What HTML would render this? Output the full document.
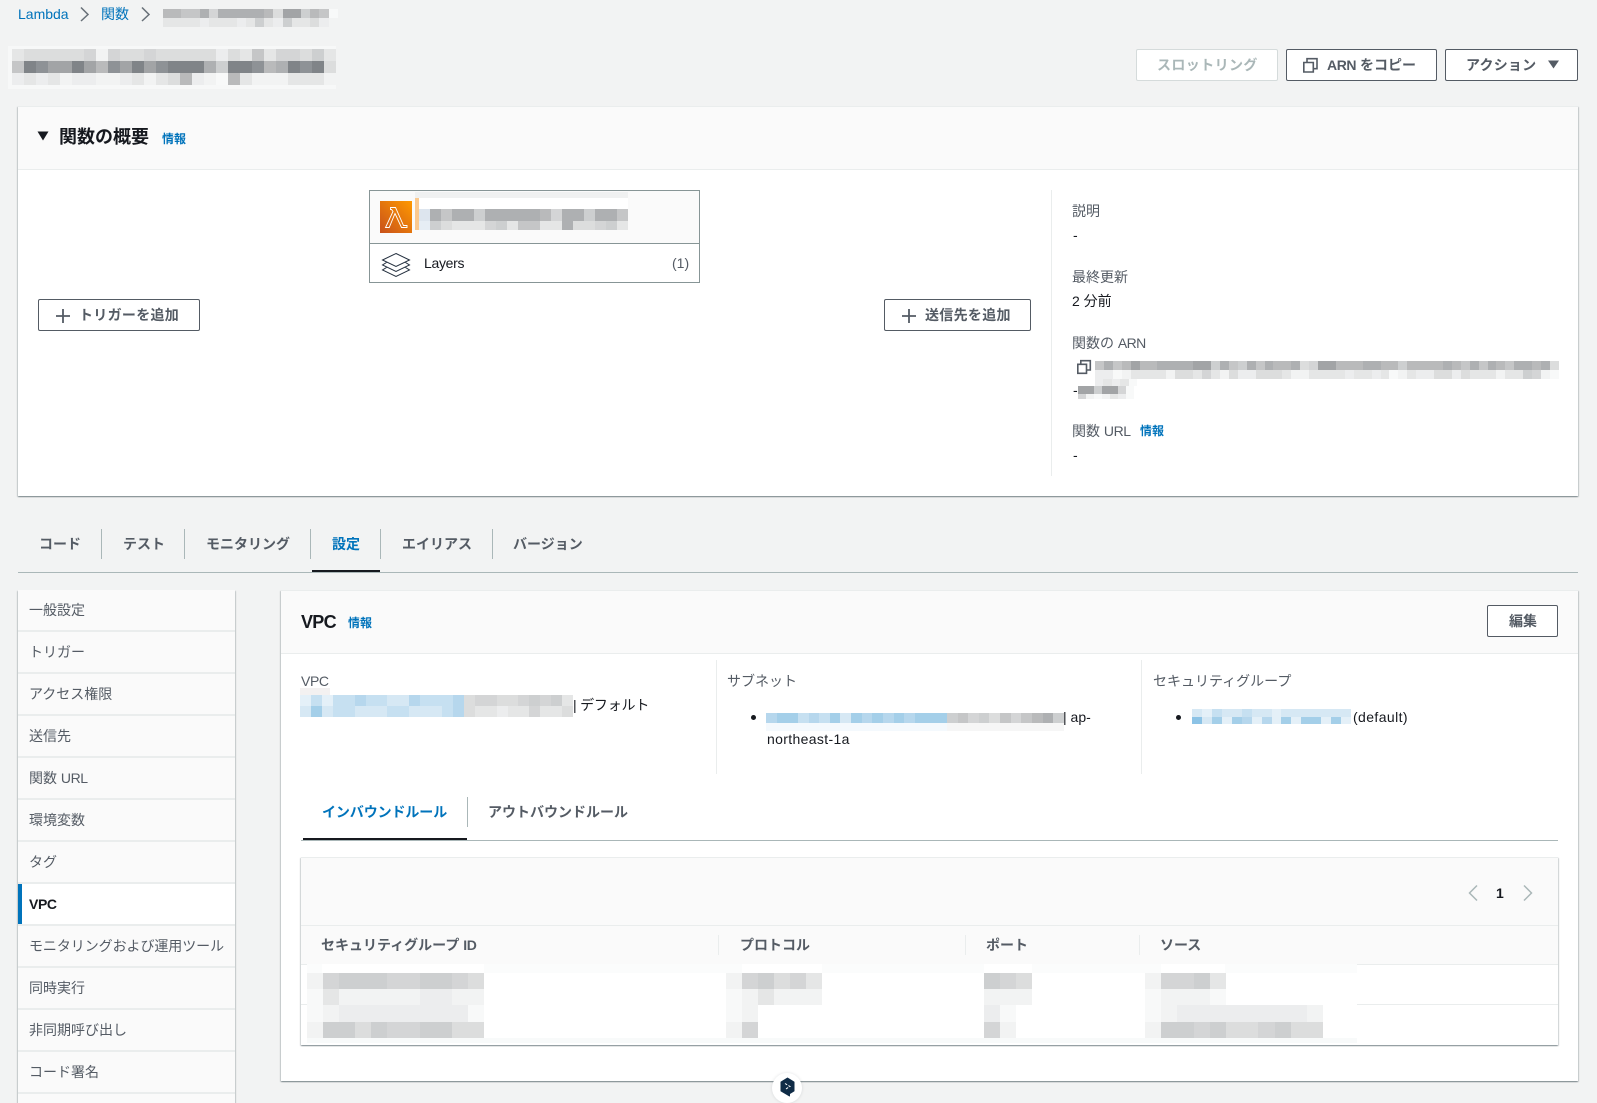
<!DOCTYPE html>
<html lang="ja"><head><meta charset="utf-8"><title>Lambda</title>
<style>
html,body{margin:0;padding:0;width:1597px;height:1103px;overflow:hidden}
body{background:#f2f3f3;font:14px/20px "Liberation Sans","Noto Sans CJK JP",sans-serif;color:#16191f}
#w{position:absolute;left:0;top:0;width:1597px;height:1103px;overflow:hidden;background:#f2f3f3}
.t{position:absolute;white-space:nowrap;line-height:20px}
.bl{color:#0073bb}.gy{color:#545b64}.b{font-weight:700}
.i{font-size:12px;font-weight:700;color:#0073bb}
.n4{letter-spacing:-.4px}
.card{position:absolute;background:#fff;box-shadow:0 1px 1px 0 rgba(0,28,36,.3),1px 1px 1px 0 rgba(0,28,36,.15),-1px 1px 1px 0 rgba(0,28,36,.15);border-top:1px solid #eaeded;box-sizing:border-box}
.hd{position:absolute;left:0;right:0;top:0;background:#fafafa;border-bottom:1px solid #eaeded;box-sizing:border-box}
.btn{position:absolute;box-sizing:border-box;background:#fff;border:1px solid #545b64;border-radius:2px;height:32px}
.l{position:absolute}
.m{position:absolute}
.m div{display:flex}
.m i{display:block;flex:1}
.p{background:#808488}.q{background:#8e9296}.r{background:#a2a4a6}.s{background:#aeb0b2}.t1{background:#b9babb}.u{background:#c5c6c7}.v{background:#cdcfd0}.w{background:#d4d5d6}.x{background:#dcdddd}.y{background:#e5e6e6}.z{background:#ecedee}.o{background:#f2f3f3}.n{background:#f8f9f9}.e{background:#fff}
.A{background:#a4cfe9}.B{background:#b6d7ed}.C{background:#c6e0f1}.D{background:#d6e8f4}.E{background:#e4f0f8}.G{background:#8cc3e6}
.si{position:absolute;left:18px;width:217px;height:40px;background:#fafafa}
.si span{position:absolute;left:11px;top:10px;white-space:nowrap;color:#545b64}
</style></head><body><div id="w">

<!-- breadcrumb -->
<span class="t bl" style="left:18px;top:4px">Lambda</span>
<svg class="l" style="left:0;top:0" width="170" height="28"><path d="M81 7.5L88 14.5 81 21M142 7.5L149 14.5 142 21" fill="none" stroke="#687078" stroke-width="1.5"/></svg>
<span class="t bl" style="left:101px;top:4px">関数</span>
<div class="m" style="left:163px;top:9px;width:175px">
<div style="height:9px"><i class=t1></i><i class=t1></i><i class=u></i><i class=u></i><i class=s></i><i class=w></i><i class=s></i><i class=s></i><i class=s></i><i class=s></i><i class=s></i><i class=t1></i><i class=x></i><i class=r></i><i class=r></i><i class=v></i><i class=t1></i><i class=u></i><i class=n></i></div>
<div style="height:9px"><i class=y></i><i class=y></i><i class=y></i><i class=y></i><i class=z></i><i class=y></i><i class=y></i><i class=y></i><i class=z></i><i class=y></i><i class=v></i><i class=y></i><i class=z></i><i class=v></i><i class=y></i><i class=y></i><i class=x></i><i class=z></i><i class=o></i></div>
</div>

<!-- title mosaic -->
<div class="l" style="left:8px;top:46px;width:328px;height:43px;background:#f7f8f8"></div>
<div class="m" style="left:12px;top:49px;width:324px">
<div style="height:12px"><i class=y></i><i class=x></i><i class=x></i><i class=x></i><i class=x></i><i class=x></i><i class=w></i><i class=o></i><i class=w></i><i class=x></i><i class=x></i><i class=w></i><i class=x></i><i class=x></i><i class=x></i><i class=x></i><i class=x></i><i class=z></i><i class=x></i><i class=y></i><i class=u></i><i class=y></i><i class=w></i><i class=w></i><i class=x></i><i class=v></i><i class=y></i></div>
<div style="height:12px"><i class=u></i><i class=p></i><i class=q></i><i class=r></i><i class=r></i><i class=p></i><i class=r></i><i class=t1></i><i class=q></i><i class=r></i><i class=p></i><i class=r></i><i class=q></i><i class=p></i><i class=p></i><i class=p></i><i class=s></i><i class=v></i><i class=p></i><i class=p></i><i class=q></i><i class=t1></i><i class=s></i><i class=p></i><i class=q></i><i class=p></i><i class=x></i></div>
<div style="height:12px"><i class=z></i><i class=y></i><i class=z></i><i class=y></i><i class=o></i><i class=z></i><i class=z></i><i class=o></i><i class=o></i><i class=z></i><i class=y></i><i class=o></i><i class=y></i><i class=x></i><i class=t1></i><i class=z></i><i class=o></i><i class=n></i><i class=t1></i><i class=y></i><i class=o></i><i class=o></i><i class=o></i><i class=y></i><i class=y></i><i class=y></i><i class=o></i></div>
</div>

<!-- top buttons -->
<div class="btn" style="left:1136px;top:49px;width:142px;border-color:#d5dbdb"></div>
<span class="t b" style="left:1157px;top:55px;color:#aab7b8;letter-spacing:.4px">スロットリング</span>
<div class="btn" style="left:1286px;top:49px;width:151px"></div>
<svg class="l" style="left:1302px;top:57px" width="17" height="16"><path d="M1.8 5.5h9.5v9.5H1.8zM5 5.5V1.7h10v10h-3.7" fill="none" stroke="#545b64" stroke-width="1.6"/></svg>
<span class="t b gy" style="left:1327px;top:55px"><span class="n4">ARN</span> をコピー</span>
<div class="btn" style="left:1445px;top:49px;width:133px"></div>
<span class="t b gy" style="left:1466px;top:55px;letter-spacing:.2px">アクション</span>
<svg class="l" style="left:1548px;top:60px" width="11" height="9"><path d="M0 .5h11L5.5 8.5z" fill="#545b64"/></svg>

<!-- overview card -->
<div class="card" style="left:18px;top:106px;width:1560px;height:390px">
 <div class="hd" style="height:63px"></div>
</div>
<svg class="l" style="left:37px;top:131px" width="12" height="10"><path d="M.5.5h11L6 9.5z" fill="#16191f"/></svg>
<span class="t b" style="left:59px;top:126px;font-size:18px;line-height:22px">関数の概要</span>
<span class="t i" style="left:162px;top:129px">情報</span>

<!-- function box -->
<div class="l" style="left:369px;top:190px;width:331px;height:93px;box-sizing:border-box;border:1px solid #879596;background:#fff">
 <div style="height:52px;background:#fafafa;border-bottom:1px solid #879596"></div>
</div>
<svg class="l" style="left:380px;top:201px" width="32" height="32" viewBox="0 0 32 32"><defs><linearGradient id="lg" x1="0" y1="1" x2="1" y2="0"><stop offset="0" stop-color="#c8511b"/><stop offset="1" stop-color="#f90"/></linearGradient></defs><rect width="32" height="32" fill="url(#lg)"/><path d="M10.5 6.5h5l8 18h3.5v2h-5.5L15 12.5 9.2 26.500H5.500L13 10.500 11.500 8.500h-1z" fill="none" stroke="#fff" stroke-width=".9"/></svg>
<div class="l" style="left:415px;top:192px;width:213px;height:6px;background:#f0f1f1"></div>
<div class="l" style="left:415px;top:198px;width:213px;height:11px;background:#fff"></div>
<div class="l" style="left:415px;top:198px;width:4px;height:32px;background:#fbc98f"></div>
<div class="m" style="left:419px;top:209px;width:209px">
<div style="height:12px"><i style="background:#dde5ee"></i><i class=s></i><i class=u></i><i class=s></i><i class=s></i><i class=v></i><i class=s></i><i class=s></i><i class=s></i><i class=s></i><i class=s></i><i class=t1></i><i class=w></i><i class=s></i><i class=s></i><i class=v></i><i class=s></i><i class=s></i><i class=u></i></div>
<div style="height:9px"><i style="background:#e6edf4"></i><i class=v></i><i class=x></i><i class=y></i><i class=y></i><i class=y></i><i class=w></i><i class=v></i><i class=y></i><i class=u></i><i class=u></i><i class=y></i><i class=y></i><i class=s></i><i class=x></i><i class=x></i><i class=w></i><i class=v></i><i class=y></i></div>
</div>
<svg class="l" style="left:380px;top:251px" width="32" height="28" viewBox="380 251 32 28"><path d="M396 253.500l13.500 6.500-13.500 6.500-13.500-6.500zM386.500 262.500l-4 2.500 13.500 6.500 13.500-6.500-4-2.500M386.500 267.500l-4 2.500 13.500 6.500 13.500-6.500-4-2.500" fill="none" stroke="#232f3e" stroke-width="1"/></svg>
<span class="t" style="left:424px;top:253px;letter-spacing:-.3px">Layers</span>
<span class="t gy" style="left:672px;top:253px">(1)</span>

<!-- add buttons -->
<div class="btn" style="left:38px;top:299px;width:162px"></div>
<svg class="l" style="left:55px;top:308px" width="16" height="16"><path d="M8 1v14M1 8h14" stroke="#545b64" stroke-width="1.8" fill="none"/></svg>
<span class="t b gy" style="left:79px;top:305px;letter-spacing:.3px">トリガーを追加</span>
<div class="btn" style="left:884px;top:299px;width:147px"></div>
<svg class="l" style="left:901px;top:308px" width="16" height="16"><path d="M8 1v14M1 8h14" stroke="#545b64" stroke-width="1.8" fill="none"/></svg>
<span class="t b gy" style="left:925px;top:305px;letter-spacing:.3px">送信先を追加</span>

<!-- right column -->
<div class="l" style="left:1051px;top:190px;width:1px;height:286px;background:#eaeded"></div>
<span class="t gy" style="left:1072px;top:201px">説明</span>
<span class="t" style="left:1073px;top:225px">-</span>
<span class="t gy" style="left:1072px;top:267px">最終更新</span>
<span class="t" style="left:1072px;top:291px">2 分前</span>
<span class="t gy" style="left:1072px;top:333px">関数の <span style="letter-spacing:-.6px">ARN</span></span>
<svg class="l" style="left:1076px;top:359px" width="16" height="16"><path d="M1.800 5.300h8.700v9H1.800zM4.800 5.300V1.700h9.500v9.300h-3.800" fill="none" stroke="#545b64" stroke-width="1.600"/></svg>
<div class="m" style="left:1095px;top:361px;width:464px">
<div style="height:9px"><i class=u></i><i class=s></i><i class=u></i><i class=t1></i><i class=r></i><i class=t1></i><i class=t1></i><i class=s></i><i class=s></i><i class=s></i><i class=s></i><i class=r></i><i class=r></i><i class=v></i><i class=s></i><i class=u></i><i class=v></i><i class=s></i><i class=u></i><i class=s></i><i class=t1></i><i class=t1></i><i class=s></i><i class=x></i><i class=w></i><i class=r></i><i class=r></i><i class=t1></i><i class=t1></i><i class=t1></i><i class=s></i><i class=s></i><i class=t1></i><i class=t1></i><i class=v></i><i class=t1></i><i class=t1></i><i class=t1></i><i class=t1></i><i class=s></i><i class=t1></i><i class=u></i><i class=s></i><i class=u></i><i class=s></i><i class=t1></i><i class=u></i><i class=s></i><i class=s></i><i class=t1></i><i class=s></i><i class=x></i></div>
<div style="height:9px"><i class=z></i><i class=z></i><i class=n></i><i class=o></i><i class=y></i><i class=y></i><i class=y></i><i class=y></i><i class=o></i><i class=x></i><i class=x></i><i class=y></i><i class=w></i><i class=y></i><i class=o></i><i class=x></i><i class=z></i><i class=z></i><i class=x></i><i class=x></i><i class=x></i><i class=y></i><i class=o></i><i class=o></i><i class=y></i><i class=y></i><i class=y></i><i class=y></i><i class=z></i><i class=y></i><i class=y></i><i class=z></i><i class=y></i><i class=n></i><i class=o></i><i class=y></i><i class=z></i><i class=z></i><i class=x></i><i class=x></i><i class=z></i><i class=x></i><i class=y></i><i class=y></i><i class=y></i><i class=o></i><i class=y></i><i class=y></i><i class=v></i><i class=w></i><i class=o></i><i class=n></i></div>
</div>
<div class="m" style="left:1095px;top:379px;width:42px"><div style="height:7px"><i class=z></i><i class=y></i><i class=z></i><i class=y></i><i class=n></i></div></div>
<span class="t" style="left:1073px;top:380px">-</span>
<div class="m" style="left:1078px;top:386px;width:56px">
<div style="height:8px"><i class=r></i><i class=r></i><i class=v></i><i class=r></i><i class=r></i><i class=w></i><i class=n></i></div>
<div style="height:5px"><i class=w></i><i class=o></i><i class=n></i><i class=o></i><i class=y></i><i class=z></i><i class=n></i></div>
</div>
<span class="t gy" style="left:1072px;top:421px">関数 <span class="n4">URL</span></span>
<span class="t i" style="left:1140px;top:421px">情報</span>
<span class="t" style="left:1073px;top:445px">-</span>

<!-- tabs -->
<div class="l" style="left:18px;top:572px;width:1560px;height:1px;background:#aab7b8"></div>
<div class="l" style="left:312px;top:570px;width:68px;height:2px;background:#16191f"></div>
<div class="l" style="left:101px;top:529px;width:1px;height:30px;background:#aab7b8"></div>
<div class="l" style="left:184px;top:529px;width:1px;height:30px;background:#aab7b8"></div>
<div class="l" style="left:310px;top:529px;width:1px;height:30px;background:#aab7b8"></div>
<div class="l" style="left:380px;top:529px;width:1px;height:30px;background:#aab7b8"></div>
<div class="l" style="left:492px;top:529px;width:1px;height:30px;background:#aab7b8"></div>
<span class="t b gy" style="left:39px;top:534px">コード</span>
<span class="t b gy" style="left:123px;top:534px">テスト</span>
<span class="t b gy" style="left:206px;top:534px">モニタリング</span>
<span class="t b bl" style="left:332px;top:534px">設定</span>
<span class="t b gy" style="left:402px;top:534px">エイリアス</span>
<span class="t b gy" style="left:513px;top:534px">バージョン</span>

<!-- sidebar -->
<div class="card" style="left:18px;top:590px;width:217px;height:520px;background:#eaeded;border-top:0"></div>
<div class="si" style="top:590px"><span>一般設定</span></div>
<div class="si" style="top:632px"><span>トリガー</span></div>
<div class="si" style="top:674px"><span>アクセス権限</span></div>
<div class="si" style="top:716px"><span>送信先</span></div>
<div class="si" style="top:758px"><span>関数 <span class="n4" style="position:static">URL</span></span></div>
<div class="si" style="top:800px"><span>環境変数</span></div>
<div class="si" style="top:842px"><span>タグ</span></div>
<div class="si" style="top:884px;background:#fff"><span class="b n4" style="color:#16191f">VPC</span></div>
<div class="l" style="left:18px;top:884px;width:4px;height:40px;background:#0073bb"></div>
<div class="si" style="top:926px"><span style="letter-spacing:-.07px">モニタリングおよび運用ツール</span></div>
<div class="si" style="top:968px"><span>同時実行</span></div>
<div class="si" style="top:1010px"><span>非同期呼び出し</span></div>
<div class="si" style="top:1052px"><span>コード署名</span></div>
<div class="si" style="top:1094px"></div>

<!-- VPC panel -->
<div class="card" style="left:281px;top:590px;width:1297px;height:491px">
 <div class="hd" style="height:63px"></div>
</div>
<span class="t b" style="left:301px;top:611px;font-size:18px;line-height:22px;letter-spacing:-.7px">VPC</span>
<span class="t i" style="left:348px;top:613px">情報</span>
<div class="btn" style="left:1487px;top:605px;width:71px"></div>
<span class="t b gy" style="left:1509px;top:611px">編集</span>

<div class="l" style="left:716px;top:660px;width:1px;height:114px;background:#eaeded"></div>
<div class="l" style="left:1141px;top:660px;width:1px;height:114px;background:#eaeded"></div>
<span class="t gy n4" style="left:301px;top:671px">VPC</span>
<div class="l" style="left:300px;top:688px;width:30px;height:7px;background:#f3f1f1"></div>
<div class="m" style="left:300px;top:695px;width:273px">
<div style="height:11px"><i class=E></i><i class=C></i><i class=E></i><i class=C></i><i class=C></i><i class=B></i><i class=C></i><i class=C></i><i class=D></i><i class=D></i><i class=B></i><i class=C></i><i class=C></i><i class=C></i><i class=B></i><i class=x></i><i class=w></i><i class=w></i><i class=x></i><i class=x></i><i class=w></i><i class=v></i><i class=w></i><i class=v></i><i class=y></i></div>
<div style="height:11px"><i class=D></i><i class=A></i><i class=D></i><i class=C></i><i class=C></i><i class=D></i><i class=D></i><i class=D></i><i class=C></i><i class=C></i><i class=D></i><i class=D></i><i class=D></i><i class=C></i><i class=B></i><i class=x></i><i class=y></i><i class=y></i><i class=z></i><i class=y></i><i class=y></i><i class=w></i><i class=y></i><i class=y></i><i class=x></i></div>
</div>
<span class="t" style="left:573px;top:695px;white-space:pre;letter-spacing:-.2px">| デフォルト</span>

<span class="t gy" style="left:727px;top:671px">サブネット</span>
<div class="l" style="left:751px;top:715px;width:5px;height:5px;border-radius:50%;background:#16191f"></div>
<div class="m" style="left:766px;top:713px;width:298px">
<div style="height:10px"><i class=B></i><i class=A></i><i class=A></i><i class=C></i><i class=B></i><i class=C></i><i class=A></i><i class=D></i><i class=A></i><i class=B></i><i class=A></i><i class=B></i><i class=A></i><i class=B></i><i class=A></i><i class=A></i><i class=A></i><i class=v></i><i class=u></i><i class=w></i><i class=v></i><i class=x></i><i class=u></i><i class=w></i><i class=u></i><i class=t1></i><i class=s></i><i class=v></i></div>
<div style="height:8px"><i style="flex:17;background:#f4f9fd"></i><i style="flex:11;background:#f6f6f6"></i></div>
</div>
<span class="t" style="left:1063px;top:707px;white-space:pre">| ap-</span>
<span class="t" style="left:767px;top:729px;letter-spacing:.35px">northeast-1a</span>

<span class="t gy" style="left:1153px;top:671px">セキュリティグループ</span>
<div class="l" style="left:1176px;top:715px;width:5px;height:5px;border-radius:50%;background:#16191f"></div>
<div class="m" style="left:1192px;top:709px;width:159px">
<div style="height:8px"><i class=D></i><i class=E></i><i class=C></i><i class=D></i><i class=D></i><i class=C></i><i class=D></i><i class=D></i><i class=E></i><i class=D></i><i class=D></i><i class=D></i><i class=D></i><i class=D></i><i class=D></i><i class=D></i></div>
<div style="height:7px"><i class=G></i><i class=D></i><i class=A></i><i class=E></i><i class=A></i><i class=B></i><i class=E></i><i class=B></i><i class=E></i><i class=A></i><i class=E></i><i class=A></i><i class=A></i><i class=E></i><i class=A></i><i class=E></i></div>
</div>
<span class="t" style="left:1353px;top:707px;letter-spacing:.4px">(default)</span>

<!-- inner tabs -->
<div class="l" style="left:301px;top:840px;width:1257px;height:1px;background:#aab7b8"></div>
<div class="l" style="left:303px;top:838px;width:164px;height:2px;background:#16191f"></div>
<div class="l" style="left:467px;top:797px;width:1px;height:30px;background:#aab7b8"></div>
<span class="t b bl" style="left:322px;top:802px;letter-spacing:-.1px">インバウンドルール</span>
<span class="t b gy" style="left:488px;top:802px">アウトバウンドルール</span>

<!-- table -->
<div class="card" style="left:301px;top:857px;width:1257px;height:188px">
 <div class="hd" style="height:107px;border-bottom:1px solid #eaeded"></div>
 <div class="l" style="left:0;right:0;top:67px;height:1px;background:#eaeded"></div>
 <div class="l" style="left:0;right:0;top:146px;height:1px;background:#eaeded"></div>
</div>
<svg class="l" style="left:1465px;top:884px" width="70" height="18"><path d="M12 1.500L4.500 9 12 16.500" fill="none" stroke="#aab7b8" stroke-width="1.500"/><path d="M59 1.500L66.500 9 59 16.500" fill="none" stroke="#aab7b8" stroke-width="1.500"/></svg>
<span class="t b" style="left:1496px;top:883px">1</span>
<div class="l" style="left:718px;top:935px;width:1px;height:20px;background:#eaeded"></div>
<div class="l" style="left:965px;top:935px;width:1px;height:20px;background:#eaeded"></div>
<div class="l" style="left:1139px;top:935px;width:1px;height:20px;background:#eaeded"></div>
<span class="t b gy" style="left:321px;top:935px">セキュリティグループ <span class="n4">ID</span></span>
<span class="t b gy" style="left:740px;top:935px">プロトコル</span>
<span class="t b gy" style="left:986px;top:935px">ポート</span>
<span class="t b gy" style="left:1160px;top:935px">ソース</span>

<!-- table mosaics -->
<div class="l" style="left:307px;top:964px;width:1050px;height:79px;background:#fff"></div>
<div class="l" style="left:307px;top:964px;width:1050px;height:9px;background:#fbfcfc"></div>
<div class="l" style="left:322px;top:964px;width:162px;height:9px;background:#fff"></div>
<div class="l" style="left:742px;top:964px;width:80px;height:9px;background:#fff"></div>
<div class="l" style="left:984px;top:964px;width:48px;height:9px;background:#fff"></div>
<div class="l" style="left:1161px;top:964px;width:64px;height:9px;background:#fff"></div>
<div class="l" style="left:307px;top:1038px;width:1050px;height:5px;background:#f8fafa"></div>

<div class="m" style="left:307px;top:973px;width:177px">
<div style="height:16px"><i class=o></i><i class=w></i><i class=v></i><i class=v></i><i class=v></i><i class=w></i><i class=w></i><i class=v></i><i class=v></i><i class=w></i><i class=x></i></div>
<div style="height:16px"><i class=n></i><i class=y></i><i class=o></i><i class=o></i><i class=o></i><i class=o></i><i class=o></i><i class=z></i><i class=z></i><i class=o></i><i class=o></i></div>
<div style="height:17px"><i class=n></i><i class=o></i><i class=z></i><i class=z></i><i class=z></i><i class=z></i><i class=z></i><i class=z></i><i class=z></i><i class=z></i><i class=n></i></div>
<div style="height:16px"><i class=o></i><i class=v></i><i class=v></i><i class=x></i><i class=v></i><i class=w></i><i class=w></i><i class=v></i><i class=v></i><i class=x></i><i class=x></i></div>
</div>
<div class="m" style="left:726px;top:973px;width:96px">
<div style="height:16px"><i class=o></i><i class=w></i><i class=v></i><i class=x></i><i class=w></i><i class=y></i></div>
<div style="height:16px"><i class=n></i><i class=o></i><i class=y></i><i class=o></i><i class=o></i><i class=o></i></div>
<div style="height:17px"><i class=n></i><i class=o></i><i class=e></i><i class=e></i><i class=e></i><i class=e></i></div>
<div style="height:16px"><i class=o></i><i class=w></i><i class=e></i><i class=e></i><i class=e></i><i class=e></i></div>
</div>
<div class="m" style="left:984px;top:973px;width:48px">
<div style="height:16px"><i class=v></i><i class=w></i><i class=x></i></div>
<div style="height:16px"><i class=o></i><i class=o></i><i class=o></i></div>
<div style="height:17px"><i class=z></i><i class=n></i><i class=e></i></div>
<div style="height:16px"><i class=w></i><i class=o></i><i class=e></i></div>
</div>
<div class="m" style="left:1145px;top:973px;width:178px">
<div style="height:16px"><i class=o></i><i class=w></i><i class=w></i><i class=v></i><i class=y></i><i class=e></i><i class=e></i><i class=e></i><i class=e></i><i class=e></i><i class=e></i></div>
<div style="height:16px"><i class=n></i><i class=o></i><i class=o></i><i class=o></i><i class=n></i><i class=e></i><i class=e></i><i class=e></i><i class=e></i><i class=e></i><i class=e></i></div>
<div style="height:17px"><i class=n></i><i class=o></i><i class=z></i><i class=z></i><i class=z></i><i class=z></i><i class=z></i><i class=z></i><i class=z></i><i class=z></i><i class=o></i></div>
<div style="height:16px"><i class=o></i><i class=v></i><i class=v></i><i class=w></i><i class=v></i><i class=x></i><i class=x></i><i class=w></i><i class=v></i><i class=x></i><i class=x></i></div>
</div>

<!-- floating badge -->
<div class="l" style="left:772px;top:1073px;width:30px;height:30px;border-radius:50%;background:#fff;box-shadow:0 0 3px rgba(0,28,36,.12)"></div>
<svg class="l" style="left:780px;top:1077px" width="15" height="20" viewBox="0 0 15 20"><path d="M7.500 1L14 5v9l-4.500 2.700V19L1 14V5z" fill="#0f2b46" stroke="#0f2b46" stroke-linejoin="round"/><path d="M5 6.500l5 3-5 3" fill="none" stroke="#fff" stroke-width="1" stroke-dasharray="2.500 1.500"/></svg>

</div></body></html>
